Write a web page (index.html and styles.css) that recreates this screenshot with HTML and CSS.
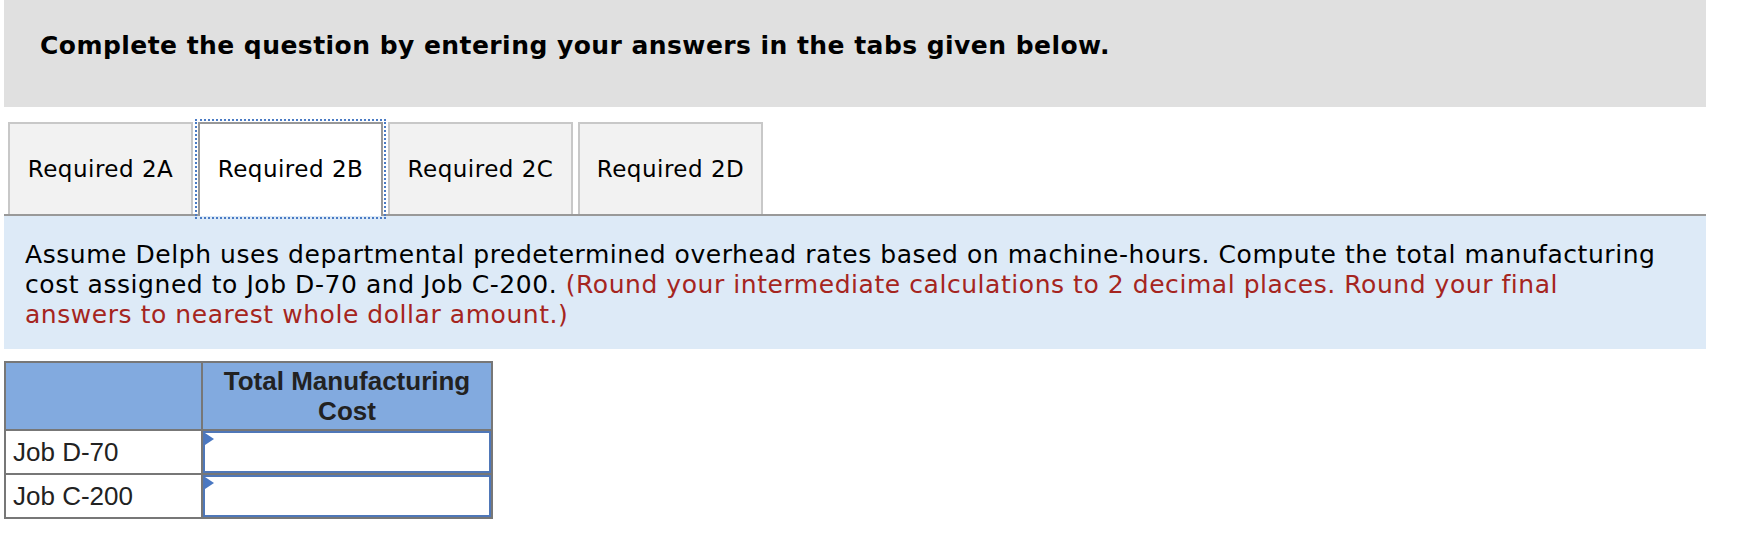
FILE: index.html
```html
<!DOCTYPE html>
<html>
<head>
<meta charset="utf-8">
<link rel="stylesheet" href="styles.css">
</head>
<body>
<div class="wrap">
  <div class="header">Complete the question by entering your answers in the tabs given below.</div>
  <div class="tabs">
    <div class="tab">Required 2A</div>
    <div class="tab active">Required 2B</div>
    <div class="tab">Required 2C</div>
    <div class="tab">Required 2D</div>
  </div>
  <div class="panel">
    Assume Delph uses departmental predetermined overhead rates based on machine-hours. Compute the total manufacturing cost assigned to Job D-70 and Job C-200. <span class="note">(Round your intermediate calculations to 2 decimal places. Round your final answers to nearest whole dollar amount.)</span>
  </div>
  <table class="grid">
    <tr class="head">
      <th class="c1"></th>
      <th class="c2">Total Manufacturing<br>Cost</th>
    </tr>
    <tr>
      <td class="label">Job D-70</td>
      <td class="inp"><div class="box"><span class="tri"></span></div></td>
    </tr>
    <tr>
      <td class="label">Job C-200</td>
      <td class="inp"><div class="box"><span class="tri"></span></div></td>
    </tr>
  </table>
</div>
</body>
</html>
```
FILE: styles.css
```css
html, body {
  margin: 0;
  padding: 0;
  background: #fff;
}
.wrap {
  margin-left: 4px;
  width: 1702px;
  font-family: "DejaVu Sans", Verdana, sans-serif;
  color: #000;
}
.header {
  height: 107px;
  box-sizing: border-box;
  background: #e0e0e0;
  padding: 30px 0 0 36px;
  font-weight: bold;
  font-size: 25px;
  letter-spacing: 0.45px;
  line-height: 32px;
  color: #000;
}
.tabs {
  margin-top: 15px;
  display: flex;
  align-items: flex-end;
  gap: 5px;
  padding-left: 4px;
  border-bottom: 2px solid #999;
  height: 92px;
}
.tab {
  width: 185px;
  height: 92px;
  box-sizing: border-box;
  border: 2px solid #c8c8c8;
  border-bottom: none;
  background: #f2f2f2;
  display: flex;
  align-items: center;
  justify-content: center;
  font-size: 23px;
  letter-spacing: 0.5px;
  color: #000;
}
.tab.active {
  background: #fff;
  border-color: #999;
  height: 94px;
  padding-bottom: 2px;
  margin-bottom: -2px;
  outline: 2px dotted #4a7bc4;
  outline-offset: 1px;
  position: relative;
  z-index: 1;
}
.panel {
  background: #ddeaf7;
  padding: 24px 42px 19px 21px;
  font-size: 25px;
  letter-spacing: 0.55px;
  line-height: 30px;
  color: #000;
}
.note {
  color: #a52520;
}
.grid {
  margin-top: 12px;
  border-collapse: collapse;
  font-family: "Liberation Sans", Arial, sans-serif;
  font-size: 26px;
  color: #222;
}
.grid th, .grid td {
  border: 2px solid #777;
  padding: 0;
}
.head th {
  background: #82aadf;
  height: 66px;
  line-height: 30px;
  font-weight: bold;
  text-align: center;
  vertical-align: middle;
}
.c1 {
  width: 195px;
}
.c2 {
  width: 288px;
}
.label {
  height: 42px;
  padding-left: 7px !important;
  text-align: left;
  vertical-align: middle;
}
.inp {
  height: 42px;
}
.box {
  position: relative;
  height: 42px;
  box-sizing: border-box;
  border: 2px solid #4f77b8;
  background: #fff;
}
.tri {
  position: absolute;
  left: 0;
  top: 0;
  width: 0;
  height: 0;
  border-top: 6px solid transparent;
  border-bottom: 6px solid transparent;
  border-left: 9px solid #4a78c2;
}
```
